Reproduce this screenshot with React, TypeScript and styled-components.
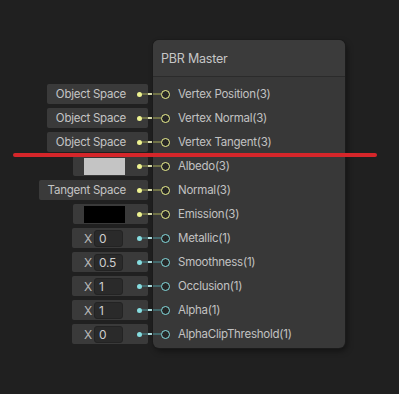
import React from "react";
import styled, { createGlobalStyle } from "styled-components";

const GlobalStyle = createGlobalStyle`
  html, body {
    margin: 0;
    padding: 0;
    background: #202020;
  }
  * {
    box-sizing: border-box;
  }
`;

type PortType = "v3" | "v1";

const portColors: Record<PortType, { main: string; dim: string; wire: string }> = {
  v3: { main: "#eef391", dim: "#6f7146", wire: "#dfe2b0" },
  v1: { main: "#86dde0", dim: "#41676a", wire: "#b2e2e4" },
};

type Input =
  | { kind: "space"; label: string }
  | { kind: "color"; color: string }
  | { kind: "float"; value: string };

type Slot = { name: string; type: PortType; input: Input };

const slots: Slot[] = [
  { name: "Vertex Position(3)", type: "v3", input: { kind: "space", label: "Object Space" } },
  { name: "Vertex Normal(3)", type: "v3", input: { kind: "space", label: "Object Space" } },
  { name: "Vertex Tangent(3)", type: "v3", input: { kind: "space", label: "Object Space" } },
  { name: "Albedo(3)", type: "v3", input: { kind: "color", color: "#c4c4c4" } },
  { name: "Normal(3)", type: "v3", input: { kind: "space", label: "Tangent Space" } },
  { name: "Emission(3)", type: "v3", input: { kind: "color", color: "#000000" } },
  { name: "Metallic(1)", type: "v1", input: { kind: "float", value: "0" } },
  { name: "Smoothness(1)", type: "v1", input: { kind: "float", value: "0.5" } },
  { name: "Occlusion(1)", type: "v1", input: { kind: "float", value: "1" } },
  { name: "Alpha(1)", type: "v1", input: { kind: "float", value: "1" } },
  { name: "AlphaClipThreshold(1)", type: "v1", input: { kind: "float", value: "0" } },
];

const Canvas = styled.div`
  position: relative;
  width: 399px;
  height: 394px;
  padding-top: 40px;
  display: flex;
  align-items: flex-start;
  background: #202020;
  font-family: Inter, "Noto Sans", sans-serif;
  overflow: hidden;
`;

const InputColumn = styled.div`
  width: 153px;
  padding-top: 42px;
  display: flex;
  flex-direction: column;
  align-items: flex-end;
`;

const InputRow = styled.div`
  height: 24px;
  display: flex;
  align-items: center;
`;

const Field = styled.div<{ $pad: number }>`
  height: 20px;
  display: flex;
  align-items: center;
  padding-left: ${(p) => p.$pad}px;
  background: #3a3a3a;
  border-radius: 2px;
  color: #c4c4c4;
  font-size: 11.5px;
  letter-spacing: -0.25px;
  white-space: nowrap;
`;

const Swatch = styled.div<{ $color: string }>`
  width: 41px;
  height: 17px;
  margin-right: 1px;
  background: ${(p) => p.$color};
`;

const AxisLabel = styled.span`
  width: 10px;
  color: #b8b8b8;
  font-size: 12px;
`;

const FloatInput = styled.div`
  width: 29px;
  height: 17px;
  margin-right: 3px;
  padding-left: 4px;
  display: flex;
  align-items: center;
  background: #2a2a2a;
  border: 1px solid #232323;
  border-radius: 3px;
  color: #cecece;
  font-size: 12px;
`;

const Dot = styled.span<{ $type: PortType }>`
  width: 5px;
  height: 5px;
  margin-left: 11px;
  border-radius: 50%;
  background: ${(p) => portColors[p.$type].main};
`;

const Line = styled.span<{ $type: PortType; $w: number; $bright?: boolean }>`
  width: ${(p) => p.$w}px;
  height: 2px;
  background: ${(p) => (p.$bright ? portColors[p.$type].wire : portColors[p.$type].dim)};
`;

const Node = styled.div`
  width: 192px;
  background: #383838;
  border-radius: 6px;
  box-shadow: 0 0 0 1px #1b1b1b, 2px 3px 6px rgba(0, 0, 0, 0.45);
  padding-bottom: 2px;
`;

const Header = styled.div`
  height: 36px;
  display: flex;
  align-items: center;
  padding-left: 8px;
  background: #3b3b3b;
  border-radius: 6px 6px 0 0;
  border-bottom: 1px solid #2b2b2b;
  color: #c6c6c6;
  font-size: 12.5px;
  letter-spacing: -0.2px;
  box-sizing: content-box;
`;

const SlotList = styled.div`
  padding-top: 5px;
  display: flex;
  flex-direction: column;
`;

const SlotRow = styled.div`
  height: 24px;
  display: flex;
  align-items: center;
`;

const Ring = styled.span<{ $type: PortType }>`
  width: 9px;
  height: 9px;
  border-radius: 50%;
  border: 1.5px solid ${(p) => portColors[p.$type].main};
  background: #262626;
`;

const SlotLabel = styled.span`
  margin-left: 8px;
  color: #c2c2c2;
  font-size: 11.5px;
  letter-spacing: -0.25px;
  white-space: nowrap;
`;

const Marker = styled.div`
  position: absolute;
  left: 13px;
  top: 153px;
  width: 364px;
  height: 4px;
  border-radius: 2px;
  background: #d5262a;
`;

const InputField = ({ input, type }: { input: Input; type: PortType }) => {
  let content: React.ReactNode;
  let pad = 9;
  if (input.kind === "space") {
    content = <span>{input.label}</span>;
  } else if (input.kind === "color") {
    pad = 11;
    content = <Swatch $color={input.color} />;
  } else {
    pad = 12;
    content = (
      <>
        <AxisLabel>X</AxisLabel>
        <FloatInput>{input.value}</FloatInput>
      </>
    );
  }
  return (
    <InputRow>
      <Field $pad={pad}>
        {content}
        <Dot $type={type} />
        <Line $type={type} $w={6} />
      </Field>
      <Line $type={type} $w={5} $bright />
    </InputRow>
  );
};

export default function App() {
  return (
    <>
      <GlobalStyle />
      <Canvas>
        <InputColumn>
          {slots.map((s) => (
            <InputField key={s.name} input={s.input} type={s.type} />
          ))}
        </InputColumn>
        <Node>
          <Header>PBR Master</Header>
          <SlotList>
            {slots.map((s) => (
              <SlotRow key={s.name}>
                <Line $type={s.type} $w={8} />
                <Ring $type={s.type} />
                <SlotLabel>{s.name}</SlotLabel>
              </SlotRow>
            ))}
          </SlotList>
        </Node>
        <Marker />
      </Canvas>
    </>
  );
}
